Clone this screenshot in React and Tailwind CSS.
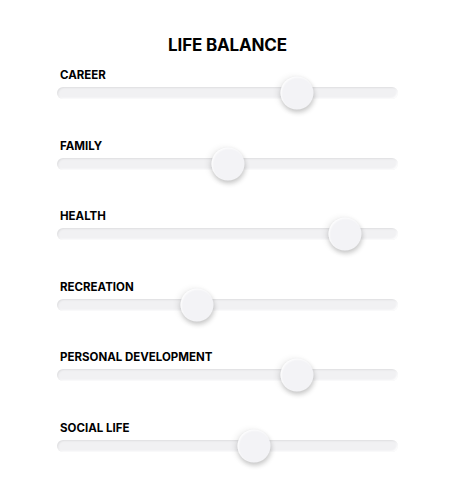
import React from "react";

const areas = [
  { name: "Career", value: 72.5 },
  { name: "Family", value: 50 },
  { name: "Health", value: 88 },
  { name: "Recreation", value: 40 },
  { name: "Personal Development", value: 72.5 },
  { name: "Social Life", value: 58.5 },
];

// Soft neumorphic slider: recessed track with a raised round knob
const BalanceSlider = ({ name, value }) => {
  return (
    <div className="flex flex-col">
      <div className="pl-[3px] text-[11.5px] leading-[14px] font-bold uppercase text-black">
        {name}
      </div>
      <div className="relative mt-[5px] h-[12px] rounded-full bg-[#f1f1f3] shadow-[inset_1px_1px_2px_rgba(0,0,0,0.08),inset_-1px_-1px_2px_rgba(255,255,255,0.9)]">
        <div
          className="absolute top-1/2 h-[33px] w-[33px] -translate-x-1/2 -translate-y-1/2 rounded-full bg-[#f3f3f6] shadow-[1px_3px_5px_rgba(0,0,0,0.2),-3px_0px_6px_rgba(0,0,0,0.07),inset_1px_1px_2px_rgba(255,255,255,0.9)]"
          style={{ left: `calc(16px + (100% - 32px) * ${value / 100})` }}
        />
      </div>
    </div>
  );
};

export default function App() {
  return (
    <div
      className="w-[459px] h-[500px] bg-white pl-[57px] pr-[61px] pt-[35px]"
      style={{ fontFamily: "Inter, 'Liberation Sans', sans-serif" }}
    >
      <h1 className="text-center text-[17px] leading-5 font-bold text-black tracking-[-0.01em]">
        LIFE BALANCE
      </h1>
      <div className="mt-[13px] flex flex-col gap-[39.5px]">
        {areas.map((a) => (
          <BalanceSlider key={a.name} name={a.name} value={a.value} />
        ))}
      </div>
    </div>
  );
}
